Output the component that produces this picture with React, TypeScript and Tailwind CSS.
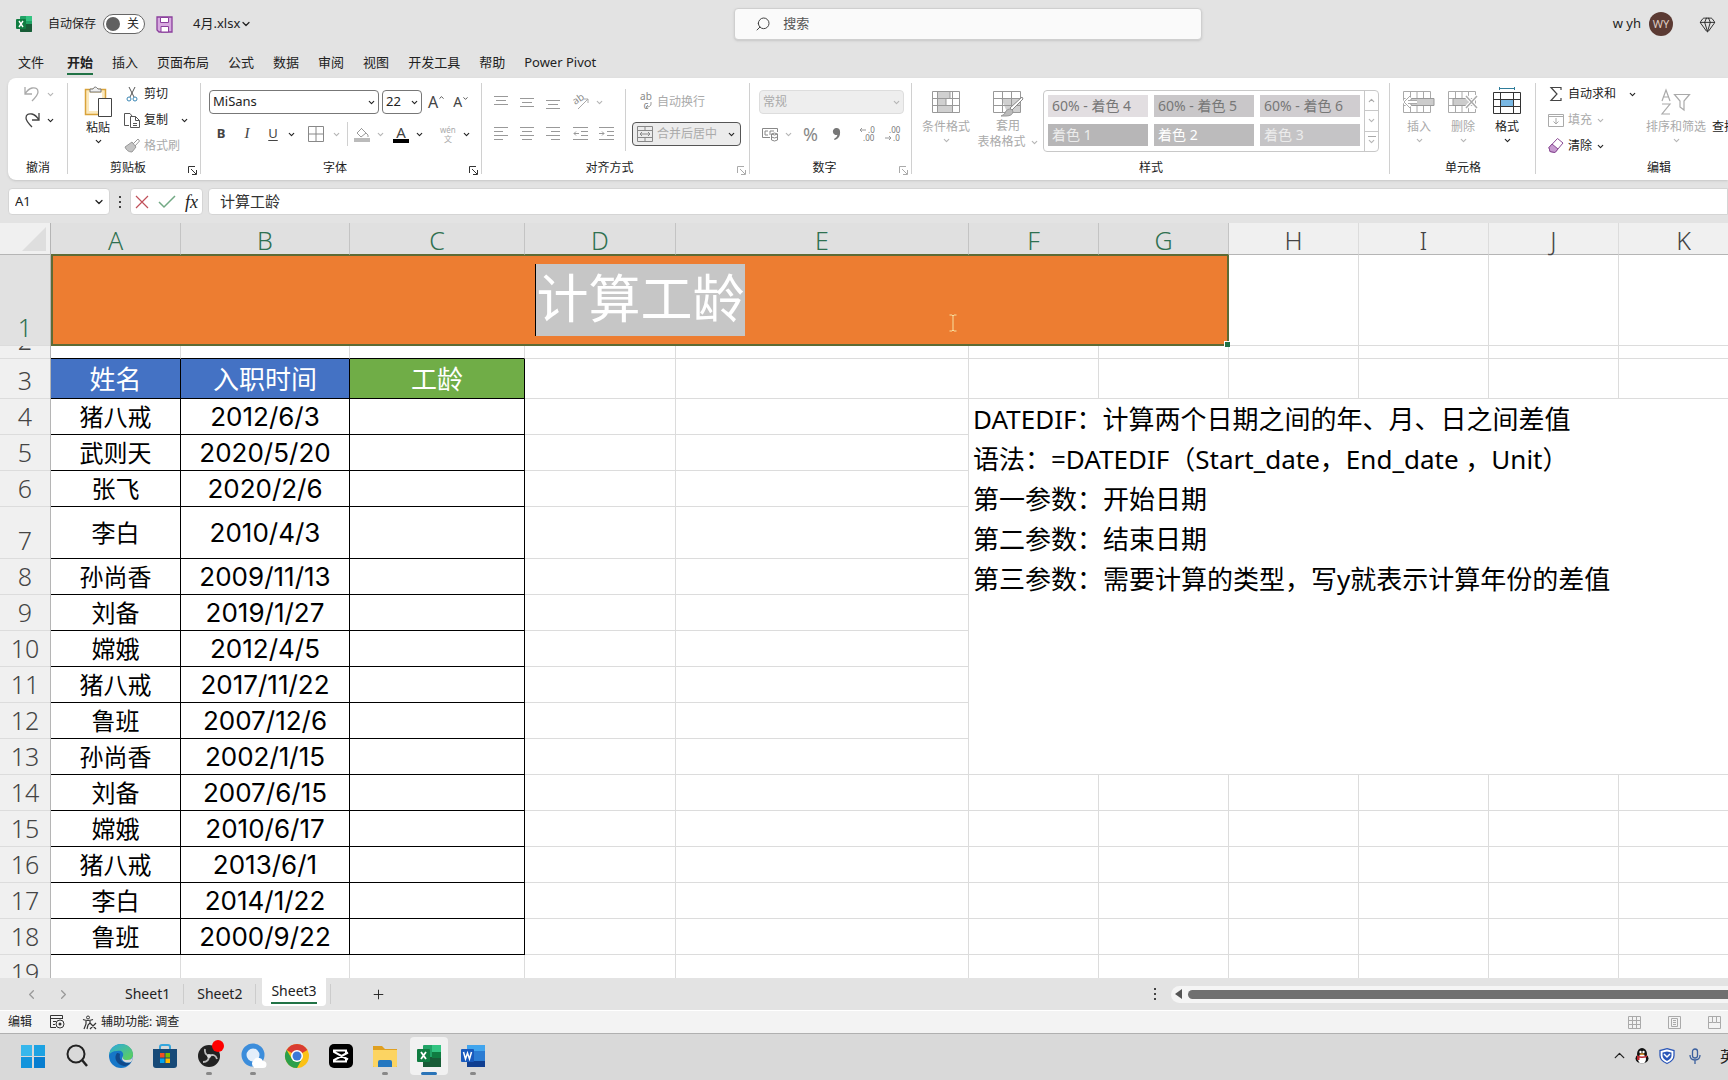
import React, { useState } from 'react';
import { ChevronDown, ChevronLeft, ChevronRight, ChevronUp, Gem, Plus, Search } from 'lucide-react';

const menus = ['开始', '插入', '页面布局', '公式', '数据', '审阅', '视图', '开发工具', '帮助', 'Power Pivot'];

const columns = [
    { name: 'A', width: 'w-[130px]' },
    { name: 'B', width: 'w-[169px]' },
    { name: 'C', width: 'w-[175px]' },
    { name: 'D', width: 'w-[151px]' },
    { name: 'E', width: 'w-[293px]' },
    { name: 'F', width: 'w-[130px]' },
    { name: 'G', width: 'w-[130px]' },
    { name: 'H', width: 'w-[130px]' },
    { name: 'I', width: 'w-[130px]' },
    { name: 'J', width: 'w-[130px]' },
    { name: 'K', width: 'w-[130px]' },
];

const people = [
    ['猪八戒', '2012/6/3'],
    ['武则天', '2020/5/20'],
    ['张飞', '2020/2/6'],
    ['李白', '2010/4/3'],
    ['孙尚香', '2009/11/13'],
    ['刘备', '2019/1/27'],
    ['嫦娥', '2012/4/5'],
    ['猪八戒', '2017/11/22'],
    ['鲁班', '2007/12/6'],
    ['孙尚香', '2002/1/15'],
    ['刘备', '2007/6/15'],
    ['嫦娥', '2010/6/17'],
    ['猪八戒', '2013/6/1'],
    ['李白', '2014/1/22'],
    ['鲁班', '2000/9/22'],
];

const notes = [
    'DATEDIF：计算两个日期之间的年、月、日之间差值',
    '语法：=DATEDIF（Start_date，End_date ，Unit）',
    '第一参数：开始日期',
    '第二参数：结束日期',
    '第三参数：需要计算的类型，写y就表示计算年份的差值',
];

const styles = [
    { name: '60% - 着色 4', look: 'bg-[#e2dee1] text-[#777]' },
    { name: '60% - 着色 5', look: 'bg-[#c9c7c9] text-[#777]' },
    { name: '60% - 着色 6', look: 'bg-[#d0cdd0] text-[#777]' },
    { name: '着色 1', look: 'bg-[#b7b6b7] text-[#ececec]' },
    { name: '着色 2', look: 'bg-[#bcbbbc] text-white' },
    { name: '着色 3', look: 'bg-[#c5c4c6] text-[#ececec]' },
];

const Arrow = ({ dim = false }: { dim?: boolean }) => (
    <ChevronDown size={9} strokeWidth={3} className={`shrink-0 ${dim ? 'text-[#b5b5b5]' : 'text-[#222]'}`} />
);

const Sep = () => <span className="h-6 w-px shrink-0 bg-[#d0d0d0]" />;

const Icon = ({ children, w = 16, h = 16, label }: { children: React.ReactNode; w?: number; h?: number; label?: string }) => (
    <svg width={w} height={h} viewBox={`0 0 ${w} ${h}`} fill="none" className="shrink-0 overflow-visible" aria-label={label}>
        {children}
    </svg>
);

const Group = ({ title, width, launcher, dim, children }: { title: string; width: string; launcher?: boolean; dim?: boolean; children: React.ReactNode }) => (
    <section className={`relative flex shrink-0 flex-col ${width}`}>
        <div className="flex h-[79px] items-start">{children}</div>
        <div className="flex h-[22px] items-center">
            <span className="flex-1 text-center">{title}</span>
            {launcher && (
                <button aria-label={`${title}设置`} className={`mr-1 mt-1 ${dim ? 'text-[#aaa]' : 'text-[#333]'}`}>
                    <Icon w={9} h={9}>
                        <path d="M.5 7V.5H7M3 3l5 5M8.500 4v4.500H4" stroke="currentColor" />
                    </Icon>
                </button>
            )}
        </div>
        <span className="absolute right-0 top-[5px] h-[91px] w-px bg-[#d0d0d0]" />
    </section>
);

const Lines = ({ rows }: { rows: number[][] }) => (
    <Icon>
        {rows.map(([x, y, w], i) => (
            <path key={i} d={`M${x} ${y}.500h${w}`} stroke="#999" />
        ))}
    </Icon>
);

const BigButton = ({ icon, text, dim }: { icon: React.ReactNode; text: string; dim?: boolean }) => (
    <button className={`flex w-11 shrink-0 flex-col items-center whitespace-nowrap pt-2 ${dim ? 'text-[#aaa]' : ''}`}>
        <span className="flex h-8 items-center">{icon}</span>
        <span className="leading-[18px]">{text}</span>
        <span className="flex h-2 items-center"><Arrow dim={dim} /></span>
    </button>
);

const gridPath = 'M.500.500h27v21H.500zM.500 7.500h27M.500 14.500h27M7.500.500v21M14 .500v21M20.500.500v21';

const TitleBar = () => {
    const [autoSave, setAutoSave] = useState(false);
    return (
        <header className="flex h-12 shrink-0 items-center pl-4">
            <Icon label="Excel">
                <rect x="4" y="0" width="12" height="16" rx="1" fill="#21a366" />
                <path d="M10 0h5a1 1 0 0 1 1 1v4h-6z" fill="#33c481" />
                <path d="M4 8h12v7a1 1 0 0 1-1 1H5a1 1 0 0 1-1-1z" fill="#185c37" />
                <rect x="0" y="3" width="10" height="10" rx="1" fill="#107c41" />
                <path d="m3 5 4 6M7 5l-4 6" stroke="#fff" strokeWidth="1.400" />
            </Icon>
            <span className="ml-4">自动保存</span>
            <button
                role="switch"
                aria-checked={autoSave}
                onClick={() => setAutoSave(!autoSave)}
                className="ml-[7px] flex h-5 w-[42px] items-center rounded-full border border-[#666] bg-white px-[2px]"
            >
                <span className="h-[14px] w-[14px] rounded-full bg-[#606060]" />
                <span className="ml-[7px]">关</span>
            </button>
            <button aria-label="保存" className="ml-[11px]">
                <Icon w={17} h={17}>
                    <path d="M1 1h15v15H3l-2-2z" fill="#d7a9e0" stroke="#8a3f9c" strokeWidth="1.300" />
                    <path d="M4.500 1.500h8v5h-8zM5 10.500h7.500V16H5z" fill="#fff" stroke="#8a3f9c" />
                </Icon>
            </button>
            <button className="ml-5 flex items-center gap-1 text-[13px]">
                4月.xlsx <ChevronDown size={12} strokeWidth={2.500} className="-ml-1" />
            </button>
            <label className="ml-[482px] flex h-8 w-[468px] items-center gap-3 rounded border border-[#cfcfcf] bg-[#fafafa] pl-5 shadow-sm">
                <Search size={16} strokeWidth={1.500} className="shrink-0 -scale-x-100 text-[#444]" />
                <input placeholder="搜索" className="w-full bg-transparent text-[13px] outline-none placeholder:text-[#555]" />
            </label>
            <div className="ml-auto flex items-center pr-3">
                <span className="text-[13px]">w yh</span>
                <span className="ml-2 flex h-6 w-6 items-center justify-center rounded-full bg-[#5b3a33] text-[11px] text-[#ddc9c0]">WY</span>
                <Gem size={17} strokeWidth={1.300} className="ml-[26px]" />
            </div>
        </header>
    );
};

const MenuBar = () => {
    const [active, setActive] = useState('开始');
    return (
        <nav className="flex h-[30px] shrink-0 items-start gap-[23px] pl-[18px] text-[13px] leading-[22px]">
            <button className="h-[27px] border-b-2 border-transparent pt-[3px]">文件</button>
            <div className="flex gap-[19px]">
                {menus.map((menu) => (
                    <button
                        key={menu}
                        onClick={() => setActive(menu)}
                        className={`h-[27px] border-b-2 pt-[3px] whitespace-nowrap ${
                            active === menu ? 'border-[#217346] font-bold' : 'border-transparent'
                        }`}
                    >
                        {menu}
                    </button>
                ))}
            </div>
        </nav>
    );
};

const FontGroup = () => (
    <Group title="字体" width="w-[281px]" launcher>
        <div className="flex flex-col gap-2 pl-2 pt-3">
            <div className="flex h-6 items-center">
                <label className="relative flex items-center">
                    <select aria-label="字体" className="h-6 w-[170px] appearance-none rounded border border-[#777] bg-white pl-[3px] text-[13px]">
                        <option>MiSans</option>
                    </select>
                    <span className="pointer-events-none absolute right-[3px]"><Arrow /></span>
                </label>
                <label className="relative ml-[3px] flex items-center">
                    <select aria-label="字号" className="h-6 w-10 appearance-none rounded border border-[#777] bg-white pl-[3px] text-[13px]">
                        <option>22</option>
                    </select>
                    <span className="pointer-events-none absolute right-[3px]"><Arrow /></span>
                </label>
                <button aria-label="增大字号" className="ml-1.5 flex text-base text-[#444]">
                    A<ChevronUp size={7} strokeWidth={3} className="mt-1" />
                </button>
                <button aria-label="减小字号" className="ml-2 flex items-center text-sm text-[#444]">
                    A<ChevronDown size={7} strokeWidth={3} className="mb-2" />
                </button>
            </div>
            <div className="flex h-6 items-center">
                <button className="w-6 text-[13px] font-bold text-[#444]">B</button>
                <button className="w-7 font-['Liberation_Serif',serif] text-[15px] italic text-[#444]">I</button>
                <button className="w-6 text-[13px] text-[#444] underline underline-offset-2">U</button>
                <span className="ml-0.5"><Arrow /></span>
                <span className="ml-1.5"><Sep /></span>
                <button aria-label="边框" className="mx-1.5 flex items-center gap-2">
                    <Icon><path d="M.500.500h15v15H.500zM8 .500v15M.500 8h15" stroke="#888" /></Icon>
                    <Arrow dim />
                </button>
                <Sep />
                <button aria-label="填充颜色" className="ml-1.5 flex items-center gap-1.5">
                    <Icon>
                        <path d="m7 2 5 5-5 4-4-4 5-5M12 7l2 2v2" stroke="#999" />
                        <path d="M0 12h16v4H0z" fill="#bbb" />
                    </Icon>
                    <Arrow dim />
                </button>
                <button aria-label="字体颜色" className="ml-2 flex items-center gap-1.5">
                    <span className="w-4 border-b-4 border-black text-center text-[15px] leading-[14px] text-[#444]">A</span>
                    <Arrow />
                </button>
                <span className="mx-2"><Sep /></span>
                <button aria-label="拼音" className="flex items-center gap-1.5 text-[#aaa]">
                    <span className="flex flex-col items-center text-[8px] leading-[9px]"><span>wén</span><span>文</span></span>
                    <Arrow />
                </button>
            </div>
        </div>
    </Group>
);

const AlignGroup = () => (
    <Group title="对齐方式" width="w-[268px]" launcher dim>
        <div className="flex flex-col gap-2 pl-[11px] pt-3">
            <div className="flex h-6 items-center gap-2.5">
                <Lines rows={[[1, 2, 14], [3, 6, 10], [1, 10, 14]]} />
                <Lines rows={[[1, 4, 14], [3, 8, 10], [1, 12, 14]]} />
                <Lines rows={[[1, 6, 14], [3, 10, 10], [1, 14, 14]]} />
                <span className="-mx-1"><Sep /></span>
                <button aria-label="方向" className="flex items-center gap-1.5">
                    <Icon>
                        <text x="1" y="9" fontSize="10" fill="#888" transform="rotate(-35 5 8)">ab</text>
                        <path d="m5 15 10-10M11 5h4v4" stroke="#aaa" />
                    </Icon>
                    <Arrow dim />
                </button>
            </div>
            <div className="flex h-6 items-center gap-2.5">
                <Lines rows={[[1, 1, 14], [1, 5, 9], [1, 9, 14], [1, 13, 9]]} />
                <Lines rows={[[1, 1, 14], [3, 5, 10], [1, 9, 14], [3, 13, 10]]} />
                <Lines rows={[[1, 1, 14], [6, 5, 9], [1, 9, 14], [6, 13, 9]]} />
                <span className="-mx-1"><Sep /></span>
                <Icon><path d="M0 1.500h15M8 5.500h7M8 9.500h7M0 13.500h15M1 7.500h5M3 5.500l-2 2 2 2" stroke="#999" /></Icon>
                <Icon><path d="M0 1.500h15M8 5.500h7M8 9.500h7M0 13.500h15M0 7.500h5M3 5.500l2 2-2 2" stroke="#999" /></Icon>
            </div>
        </div>
        <div className="ml-2.5 mt-[11px] h-[62px] w-px bg-[#d0d0d0]" />
        <div className="flex flex-col gap-2 pl-1.5 pt-3 text-[#aaa]">
            <button className="flex h-6 items-center gap-[3px] pl-1.5">
                <Icon>
                    <foreignObject x="0" y="-2" width="16" height="20">
                        <span className="flex flex-col text-[10px] leading-[9px] text-[#888]"><span>ab</span><span>c</span></span>
                    </foreignObject>
                    <path d="M13 8v2q0 3-5 3m2-2-2 2 2 2" stroke="#999" />
                </Icon>
                自动换行
            </button>
            <button className="flex h-6 w-[109px] items-center gap-1 whitespace-nowrap rounded border border-[#555] bg-[#ececec] pl-1">
                <Icon><path d="M.500.500h15v15H.500zM.500 4.500h15M.500 11.500h15M8 .500v4M8 11.500v4M3 8h10M5 6 3 8l2 2M11 6l2 2-2 2" stroke="#888" /></Icon>
                合并后居中
                <span className="ml-auto mr-1"><Arrow /></span>
            </button>
        </div>
    </Group>
);

const NumberGroup = () => (
    <Group title="数字" width="w-[162px]" launcher dim>
        <div className="flex flex-1 flex-col gap-2 pl-[9px] pr-2 pt-3">
            <label className="relative flex items-center">
                <select aria-label="数字格式" className="h-6 w-full appearance-none rounded border border-[#ddd] bg-[#eee] pl-[3px] text-[#aaa]">
                    <option>常规</option>
                </select>
                <span className="pointer-events-none absolute right-[3px]"><Arrow dim /></span>
            </label>
            <div className="flex h-6 items-center pl-[3px]">
                <Icon>
                    <path d="M8 11.500H.500v-9h15V6M6 5H3v4h3M8 9V5h4" stroke="#888" />
                    <path d="M9.500 8q3-2 6 0v6q-3 2-6 0zM9.500 8q3 2 6 0M9.500 11q3 2 6 0" stroke="#888" fill="#fff" />
                </Icon>
                <span className="ml-1.5"><Arrow dim /></span>
                <button className="ml-2.5 text-lg leading-6 text-[#888]">%</button>
                <button aria-label="千位分隔" className="ml-[14px]">
                    <Icon w={9} h={14}><path d="M4.500 1a3.500 3.500 0 1 0 1 6.800Q5 11 2 12l.500 1C7 12 8.500 8 8 4.500A3.500 3.500 0 0 0 4.500 1z" fill="#777" /></Icon>
                </button>
                <span className="ml-2.5"><Sep /></span>
                <button aria-label="增加小数位数" className="ml-2">
                    <Icon>
                        <path d="M1 4h6M3 2 1 4l2 2" stroke="#999" />
                        <text x="9" y="7" fontSize="8" fill="#777">.0</text>
                        <text x="4" y="15" fontSize="8" fill="#777">.00</text>
                    </Icon>
                </button>
                <button aria-label="减少小数位数" className="ml-2.5">
                    <Icon>
                        <path d="M0 12h6M4 10l2 2-2 2" stroke="#999" />
                        <text x="4" y="7" fontSize="8" fill="#777">.00</text>
                        <text x="8" y="15" fontSize="8" fill="#777">.0</text>
                    </Icon>
                </button>
            </div>
        </div>
    </Group>
);

const StyleGroup = () => (
    <Group title="样式" width="w-[478px]">
        <div className="pl-3">
            <BigButton
                dim
                text="条件格式"
                icon={<Icon w={28} h={22}><path d="M6 0h12v7H6zM6 7h8v7H6zM6 14h14v7H6z" fill="#d0d0d0" /><path d="M.500.500h27v21H.500zM.500 7.500h27M.500 14.500h27M5.500.500v21M18 .500v7M14 7.500v7M20.500 .500v21" stroke="#999" /></Icon>}
            />
        </div>
        <button className="ml-2.5 flex w-[60px] flex-col items-center whitespace-nowrap pt-2 text-[#aaa]">
            <span className="flex h-8 items-center">
                <Icon w={31} h={28}>
                    <path d="M8 10h20v14H14z" fill="#d0d0d0" />
                    <path d="M.500 3.500h27v21H.500zM.500 10.500h27M.500 17.500h27M9.500 3.500v21M18.500 3.500v21" stroke="#999" />
                    <path d="M29 9 17 20l2 2L30 11z" fill="#fff" stroke="#888" />
                    <path d="M8 28q4-1 5-5 4-4 7 0 0 5-7 5z" fill="#bbb" stroke="#999" />
                </Icon>
            </span>
            <span className="leading-4">套用</span>
            <span className="flex items-center gap-1 leading-4">表格格式 <Arrow dim /></span>
        </button>
        <div className="ml-[5px] mt-3 flex h-[62px] w-[336px] rounded border border-[#c8c8c8]">
            <div className="grid flex-1 grid-cols-3 gap-1.5 p-1">
                {styles.map((s) => (
                    <button key={s.name} className={`h-[22px] whitespace-nowrap pl-1 text-left text-sm leading-[22px] ${s.look}`}>
                        {s.name}
                    </button>
                ))}
            </div>
            <div className="flex w-[14px] flex-col divide-y divide-[#c8c8c8] border-l border-[#c8c8c8] text-[#aaa]">
                <button aria-label="上一行" className="flex flex-1 items-center justify-center"><ChevronUp size={9} strokeWidth={3} /></button>
                <button aria-label="下一行" className="flex flex-1 items-center justify-center"><Arrow dim /></button>
                <button aria-label="其他" className="flex flex-1 flex-col items-center justify-center">
                    <span className="h-px w-2 bg-[#aaa]" />
                    <Arrow dim />
                </button>
            </div>
        </div>
    </Group>
);

const Ribbon = () => (
    <div className="ml-2 flex h-[102px] shrink-0 overflow-hidden rounded-l-lg bg-white shadow">
        <Group title="撤消" width="w-[60px]">
            <div className="flex flex-col gap-2.5 pl-4 pt-2">
                <button aria-label="撤消" className="flex items-center gap-1.5">
                    <Icon><path d="M1 1v7h7M1 8q3-5 7-6 6-1 6 4 0 3-6 9" stroke="#aaa" strokeWidth="1.300" /></Icon>
                    <Arrow dim />
                </button>
                <button aria-label="恢复" className="flex items-center gap-1.5">
                    <Icon><path d="M15 1v7H8M15 8q-3-5-7-6-6-1-6 4 0 3 6 9" stroke="#444" strokeWidth="1.300" /></Icon>
                    <Arrow />
                </button>
            </div>
        </Group>
        <Group title="剪贴板" width="w-[133px]" launcher>
            <button className="ml-2 flex w-11 flex-col items-center pt-[7px]">
                <Icon w={28} h={32}>
                    <path d="M1.500 4.500h20v25h-20z" fill="#fbe9bd" stroke="#d9a33a" strokeWidth="1.500" />
                    <path d="M5 8h13v18H5z" fill="#fff" />
                    <path d="M6 7V4h3q2-4 5 0h3v3z" fill="#eee" stroke="#777" />
                    <path d="M14.500 13.500h13v18h-13z" fill="#fff" stroke="#444" />
                </Icon>
                <span className="mt-0.5 leading-[18px]">粘贴</span>
                <Arrow />
            </button>
            <div className="flex flex-col gap-2 pl-1 pt-[7px]">
                <button className="flex h-[18px] items-center gap-1">
                    <Icon>
                        <path d="M5 1l5 10M11 1 6 11" stroke="#555" />
                        <circle cx="5" cy="13" r="2" stroke="#3a86b4" /><circle cx="11" cy="13" r="2" stroke="#3a86b4" />
                    </Icon>
                    剪切
                </button>
                <button className="flex h-[18px] items-center gap-1">
                    <Icon><path d="M5 13.500H.500v-12H6L8 4M6.500 4.500h5l4 4v7h-9zM11.500 4.500v4h4M9 11.500h4M9 13.500h4" stroke="#555" /></Icon>
                    复制
                    <span className="ml-2"><Arrow /></span>
                </button>
                <button className="flex h-[18px] items-center gap-1 text-[#aaa]">
                    <Icon>
                        <path d="M1 9l7-5 4 5-4 5q-5 0-7-5z" fill="#c4c4c4" stroke="#999" />
                        <path d="m9 6 5-5 1.500 2L11 8" stroke="#999" />
                    </Icon>
                    格式刷
                </button>
            </div>
        </Group>
        <FontGroup />
        <AlignGroup />
        <NumberGroup />
        <StyleGroup />
        <Group title="单元格" width="w-[146px]">
            <div className="flex pl-[7px]">
                <BigButton dim text="插入" icon={<Icon w={32} h={22}><path d={gridPath} stroke="#aaa" /><path d="M8 7.500h23v7H8z" fill="#ccc" stroke="#999" /><path d="M14 11H2M7 6l-5 5 5 5" stroke="#fff" strokeWidth="4" /><path d="M14 9.500H5M14 12.500H5M7 5 1 11l6 6" stroke="#aaa" /></Icon>} />
                <BigButton dim text="删除" icon={<Icon w={30} h={22}><path d={gridPath} stroke="#aaa" /><path d="M5 7.500h16v7H5z" fill="#ccc" stroke="#999" /><path d="m18 5 11 12M29 5 18 17" stroke="#fff" strokeWidth="4" /><path d="m18 5 11 12M29 5 18 17" stroke="#aaa" strokeWidth="1.500" /></Icon>} />
                <BigButton text="格式" icon={<Icon w={28} h={30}><path d="M6.500 1.500h15M6.500 0v3M21.500 0v3" stroke="#2f7d9b" /><path d="M.500 5.500h27v21H.500zM.500 12.500h27M.500 19.500h27M7.500 5.500v21M20.500 5.500v21" stroke="#333" /><path d="M8 13h12v6H8z" fill="#79b8e4" /></Icon>} />
            </div>
        </Group>
        <Group title="编辑" width="w-[246px]">
            <div className="flex w-[102px] shrink-0 flex-col gap-2 pl-3 pt-[7px]">
                <button className="flex h-[18px] items-center gap-1 whitespace-nowrap">
                    <Icon><path d="M13 4V1.500H3L9 8l-6 6.500h10V12" stroke="#444" strokeWidth="1.200" /></Icon>
                    自动求和
                    <span className="ml-2"><Arrow /></span>
                </button>
                <button className="flex h-[18px] items-center gap-1 text-[#aaa]">
                    <Icon><path d="M.500 2.500h15v12H.500zM.500 4.500h15M8 6v6M5.500 9.500 8 12l2.500-2.500" stroke="#aaa" /></Icon>
                    填充 <Arrow dim />
                </button>
                <button className="flex h-[18px] items-center gap-1">
                    <Icon><path d="M1 9.500 9.500.500 15 5 7 14.500 2 13.500z" fill="#fff" stroke="#8a4a94" /><path d="M1 9.500 4 6l6 5-3 3.500-5-1z" fill="#c79bd0" stroke="#8a4a94" /></Icon>
                    清除 <Arrow />
                </button>
            </div>
            <div className="flex pl-4">
                <BigButton dim text="排序和筛选" icon={<Icon w={30} h={28}><path d="m1 13 4-11 4 11M2.500 9h5M1 16h8L1 26h8M13.500 6.500h15L23 13v9l-4-3v-6z" stroke="#aaa" strokeWidth="1.200" /></Icon>} />
                <div className="ml-[22px]">
                    <BigButton text="查找和选择" icon={<Search size={22} strokeWidth={1.200} className="text-[#444]" />} />
                </div>
            </div>
        </Group>
    </div>
);

const FormulaBar = () => (
    <div className="flex h-[43px] shrink-0 items-center pl-2">
        <div className="flex h-[27px] w-[102px] items-center rounded border border-[#d5d5d5] bg-white pl-1.5 pr-1">
            <input aria-label="名称框" defaultValue="A1" className="w-full bg-transparent text-[13px] outline-none" />
            <ChevronDown size={12} strokeWidth={2.500} className="shrink-0" />
        </div>
        <span className="flex w-[20px] flex-col items-center gap-[3px]">
            <i className="h-0.5 w-0.5 bg-[#444]" /><i className="h-0.5 w-0.5 bg-[#444]" /><i className="h-0.5 w-0.5 bg-[#444]" />
        </span>
        <div className="flex h-[27px] w-[73px] items-center justify-between rounded border border-[#d5d5d5] bg-white px-1">
            <button aria-label="取消"><Icon w={14} h={14}><path d="m1 1 12 12M13 1 1 13" stroke="#c0505a" strokeWidth="1.200" /></Icon></button>
            <button aria-label="输入"><Icon w={18} h={14}><path d="m1 7 5 5L17 1" stroke="#72a984" strokeWidth="1.500" /></Icon></button>
            <button aria-label="插入函数" className="font-['Liberation_Serif',serif] text-lg leading-5 italic">fx</button>
        </div>
        <input aria-label="编辑栏" defaultValue="计算工龄" className="ml-[5px] h-[27px] flex-1 rounded-l border border-[#d5d5d5] bg-white pb-[3px] pl-[11px] text-[15px] text-[#333] outline-none" />
    </div>
);

const line = 'border-r border-b border-[#dcdcdc] p-0';
const boxed = 'border-r border-b border-black p-0 text-center';

const RowHead = ({ n, height, active }: { n: number; height: string; active?: boolean }) => (
    <th className="border-r border-[#b5b5b5] p-0 font-light">
        <div className={`flex items-end justify-center overflow-hidden border-b border-[#dcdcdc] text-[25px] leading-9 ${height} ${active ? 'bg-[#e1e1e1] text-[#2f7050]' : 'bg-[#f0f0f0] text-[#444]'}`}>
            {n}
        </div>
    </th>
);

const Empty = ({ count }: { count: number }) => (
    <>
        {Array.from({ length: count }, (_, i) => <td key={i} className={line} />)}
    </>
);

const Sheet = () => (
    <div className="min-h-0 flex-1 overflow-hidden bg-white">
        <table className="w-[1749px] table-fixed border-separate border-spacing-0 text-black">
            <colgroup>
                <col className="w-[51px]" />
                {columns.map((c) => <col key={c.name} className={c.width} />)}
            </colgroup>
            <thead>
                <tr className="text-[25px] leading-[28px]">
                    <th className="border-r border-b border-[#b5b5b5] bg-[#f0f0f0] p-0">
                        <svg width="24" height="24" viewBox="0 0 24 24" className="ml-auto mr-1"><path d="M24 0v24H0z" fill="#dedede" /></svg>
                    </th>
                    {columns.map((c, i) => (
                        <th key={c.name} className={`border-r border-b p-0 pt-[3px] font-light ${i < 7 ? 'border-r-[#c4c4c4] border-b-[#5d6b35] bg-[#e0e0e0] text-[#2f7050]' : 'border-r-[#dcdcdc] border-b-[#b5b5b5] bg-[#f0f0f0] text-[#444]'}`}>
                            {c.name}
                        </th>
                    ))}
                </tr>
            </thead>
            <tbody>
                <tr>
                    <RowHead n={1} height="h-[91px]" active />
                    <td colSpan={7} className="p-0">
                        <div className="relative flex h-[91px] items-center justify-center border-2 border-t border-[#5d6b35] bg-[#ed7d31]">
                            <span className="h-[72px] border-l border-black bg-[#c6c6c6] text-[52px] leading-[68px] text-white">计算工龄</span>
                            <svg width="8" height="18" viewBox="0 0 8 18" className="absolute bottom-3 left-[896px]" fill="none">
                                <path d="M.500 1h2.500l1 1 1-1h2.500M4 2v14M.500 17h2.500l1-1 1 1h2.500" stroke="#f7e0a0" />
                            </svg>
                            <span className="absolute -bottom-[3px] -right-[3px] h-[6px] w-[6px] border-l border-t border-white bg-[#217346]" />
                        </div>
                    </td>
                    <Empty count={4} />
                </tr>
                <tr>
                    <RowHead n={2} height="h-[13px]" />
                    {[0, 1, 2].map((i) => <td key={i} className="border-r border-b border-r-[#dcdcdc] border-b-black p-0" />)}
                    <Empty count={8} />
                </tr>
                <tr className="text-[26px] leading-9 text-white">
                    <RowHead n={3} height="h-[40px]" />
                    <td className={`${boxed} bg-[#4472c4]`}>姓名</td>
                    <td className={`${boxed} bg-[#4472c4]`}>入职时间</td>
                    <td className={`${boxed} bg-[#70ad47]`}>工龄</td>
                    <Empty count={8} />
                </tr>
                {people.map(([name, date], i) => (
                    <tr key={i} className="text-2xl">
                        <RowHead n={i + 4} height={i === 3 ? 'h-[52px]' : 'h-[36px]'} />
                        <td className={boxed}>{name}</td>
                        <td className={`${boxed} font-['Inter','Noto_Sans_CJK_SC',sans-serif] text-[26px] leading-8`}>{date}</td>
                        <td className={boxed} />
                        <Empty count={2} />
                        {i === 0 && (
                            <td rowSpan={10} colSpan={6} className="border-b border-[#dcdcdc] p-0 pl-1 align-top text-[26px] leading-10 whitespace-pre">
                                {notes.map((note) => <p key={note}>{note}</p>)}
                            </td>
                        )}
                        {i > 9 && <Empty count={6} />}
                    </tr>
                ))}
                <tr>
                    <RowHead n={19} height="h-[36px]" />
                    <Empty count={11} />
                </tr>
            </tbody>
        </table>
    </div>
);

const SheetTabs = () => {
    const [sheet, setSheet] = useState('Sheet3');
    return (
        <div className="flex h-8 shrink-0 items-center text-sm">
            <button aria-label="上一个工作表" className="ml-6"><ChevronLeft size={15} className="text-[#999]" /></button>
            <button aria-label="下一个工作表" className="ml-[17px]"><ChevronRight size={15} className="text-[#999]" /></button>
            <div className="ml-[41px] flex h-full items-start">
                {['Sheet1', 'Sheet2', 'Sheet3'].map((name) => (
                    <button
                        key={name}
                        onClick={() => setSheet(name)}
                        className={sheet === name ? 'ml-1.5 h-7 rounded-b bg-white px-[9px]' : 'mt-1.5 h-5 border-r border-[#ccc] px-[13px] leading-5'}
                    >
                        <span className={sheet === name ? 'block border-b-2 border-[#217346] leading-[22px]' : ''}>{name}</span>
                    </button>
                ))}
            </div>
            <span className="ml-1 h-5 w-px bg-[#ccc]" />
            <button aria-label="新工作表" className="ml-10"><Plus size={15} strokeWidth={1.500} /></button>
            <div className="ml-auto flex w-[576px] items-center">
                <span className="flex w-[6px] flex-col items-center gap-[3px]">
                    <i className="h-0.5 w-0.5 bg-[#444]" /><i className="h-0.5 w-0.5 bg-[#444]" /><i className="h-0.5 w-0.5 bg-[#444]" />
                </span>
                <div className="ml-[13px] flex h-[17px] flex-1 items-center gap-1.5 rounded-l-full bg-[#f5f5f5] pl-1">
                    <svg width="7" height="10" viewBox="0 0 7 10"><path d="M7 0v10L0 5z" fill="#555" /></svg>
                    <span className="h-[9px] flex-1 rounded-l-full bg-[#707070]" />
                </div>
            </div>
        </div>
    );
};

const StatusBar = () => (
    <div className="flex h-[23px] shrink-0 items-center border-t border-white bg-[#f3f3f3] pl-2">
        <span>编辑</span>
        <span className="ml-[18px]">
            <Icon w={15} h={14}>
                <path d="M6 12.500H.500v-12h12V4M.500 3.500h12M3 6.500h3M3 9.500h2" stroke="#333" />
                <circle cx="10" cy="9" r="4" stroke="#333" /><circle cx="10" cy="9" r="1.500" fill="#333" />
            </Icon>
        </span>
        <button className="ml-[17px] flex items-center gap-1">
            <Icon w={15} h={15}>
                <circle cx="6" cy="2.500" r="1.500" stroke="#333" />
                <path d="M1 4.500q5 2 10 0M4 6v3l-2 5M8 6v2l-2 2-1 4M8 8l6 6M14 8l-6 6" stroke="#333" strokeWidth="1.200" />
            </Icon>
            辅助功能: 调查
        </button>
        <div className="ml-auto flex gap-[27px] pr-[7px]">
            <Icon w={13} h={13}><path d="M.500.500h12v12H.500zM.500 4.500h12M.500 8.500h12M4.500.500v12M8.500.500v12" stroke="#aaa" /></Icon>
            <Icon w={13} h={13}><path d="M.500.500h12v12H.500zM3.500 2.500h6v8h-6zM5 4.500h3M5 6.500h3M5 8.500h3" stroke="#aaa" /></Icon>
            <Icon w={13} h={13}><path d="M.500.500h12v12H.500zM4.500.500v6h-4M8.500.500v6h4M4.500 6.500h4" stroke="#aaa" /></Icon>
        </div>
    </div>
);

const apps = [
    {
        name: '开始',
        icon: <><path d="M0 1h11v11H0z" fill="#37b7ec" /><path d="M13 1h11v11H13z" fill="#1da2e2" /><path d="M0 13h11v11H0z" fill="#1394dc" /><path d="M13 13h11v11H13z" fill="#087ed0" /></>,
    },
    {
        name: '搜索',
        icon: <><circle cx="11" cy="10" r="8.500" stroke="#222" strokeWidth="2" /><path d="m17 16 5 6" stroke="#222" strokeWidth="2.500" /></>,
    },
    {
        name: 'Edge',
        icon: (
            <>
                <defs>
                    <linearGradient id="edge" x1="0" y1="0" x2="1" y2="1"><stop stopColor="#2ba9e1" /><stop offset="1" stopColor="#62d34e" /></linearGradient>
                </defs>
                <circle cx="12" cy="12" r="12" fill="#1677c8" />
                <path d="M0 11C1 4 6 0 12 0c7 0 12 5 12 10 0 4-3 6-6 6-4 0-5-2-4-4 1-4-2-6-6-5-4 0-7 2-8 4z" fill="url(#edge)" />
                <path d="M8 9c-4 5 0 12 7 13 3 0 6-2 7-4-5 3-13-1-11-8-1-1-2-1-3-1z" fill="#114a8b" />
                <path d="M14 12c-1 2 0 4 4 4 3 0 5-1 6-4 0 2-1 5-2 6-6 2-11-2-8-6z" fill="#d9d9d9" />
            </>
        ),
    },
    {
        name: 'Store',
        icon: (
            <>
                <path d="M7 6V3q0-2 2-2h6q2 0 2 2v3" stroke="#35a6dd" strokeWidth="2" />
                <path d="M0 5h24v16q0 3-3 3H3q-3 0-3-3z" fill="#174a78" />
                <path d="M7 9h4.500v4.500H7z" fill="#f25022" /><path d="M12.500 9H17v4.500h-4.500z" fill="#7fba00" /><path d="M7 14.500h4.500V19H7z" fill="#00a4ef" /><path d="M12.500 14.500H17V19h-4.500z" fill="#ffb900" />
            </>
        ),
    },
    {
        name: 'OBS',
        running: true,
        icon: (
            <>
                <circle cx="12" cy="12" r="11" fill="#222" />
                <path d="M12 12q-5-2-4-7M12 12q0 6-6 6M12 12q6-3 8 3" stroke="#bbb" strokeWidth="1.800" />
                <circle cx="12" cy="12" r="2" fill="#ddd" />
                <circle cx="21" cy="2" r="6" fill="#f00" />
            </>
        ),
    },
    {
        name: 'QQ浏览器',
        running: true,
        icon: (
            <>
                <circle cx="12" cy="11" r="9" stroke="#3c8ddb" strokeWidth="5" fill="#e3eefa" />
                <path d="M13 23a4 4 0 0 1 0-7 5 5 0 0 1 9 1 3.500 3.500 0 0 1 0 7h-9z" fill="#fff" />
            </>
        ),
    },
    {
        name: 'Chrome',
        icon: (
            <>
                <circle cx="12" cy="12" r="12" fill="#fbc116" />
                <path d="M12 12 1.600 6A12 12 0 0 1 22.400 6z" fill="#d93c32" />
                <path d="M1.600 6A12 12 0 0 0 12 24l5-9-5 3-5-3z" fill="#2b9f4b" />
                <circle cx="12" cy="12" r="6" fill="#fff" /><circle cx="12" cy="12" r="4.500" fill="#3c78d8" />
            </>
        ),
    },
    {
        name: '剪映',
        icon: <><rect width="24" height="24" rx="5" fill="#000" /><path d="M19 8.500 5 16v1.500h12V15M19 15.500 5 8V6.500h12V9" stroke="#fff" strokeWidth="2" /></>,
    },
    {
        name: '文件资源管理器',
        running: true,
        icon: <><path d="M0 2h9l3 3h12v18H0z" fill="#e0a020" /><path d="M0 6h24v16q0 1-1 1H1q-1 0-1-1z" fill="#fcd462" /><path d="M5 23v-5q0-2 2-2h10q2 0 2 2v5z" fill="#2477c0" /></>,
    },
    {
        name: 'Excel',
        running: true,
        active: true,
        icon: (
            <>
                <rect x="6" y="1" width="18" height="22" rx="1" fill="#21a366" /><path d="M15 1h9v7h-9z" fill="#33c481" /><path d="M6 13h18v10H6z" fill="#185c37" /><path d="M15 8h9v6h-9z" fill="#107c41" />
                <rect x="0" y="5" width="13" height="13" rx="1" fill="#107c41" /><path d="m4 8 5 7M9 8l-5 7" stroke="#fff" strokeWidth="1.800" />
            </>
        ),
    },
    {
        name: 'Word',
        running: true,
        icon: (
            <>
                <rect x="6" y="1" width="18" height="22" rx="1" fill="#2b7cd3" /><path d="M6 1h18v6H6z" fill="#41a5ee" /><path d="M6 17h18v6H6z" fill="#103f91" />
                <rect x="0" y="5" width="13" height="13" rx="1" fill="#185abd" /><path d="m2.500 8 2 7 2-6 2 6 2-7" stroke="#fff" strokeWidth="1.500" />
            </>
        ),
    },
];

const Taskbar = () => (
    <footer className="flex h-[47px] shrink-0 items-center border-t border-[#b0b0b0] bg-[#d9d9d9] pb-[2px] pl-[11px]">
        {apps.map((app) => (
            <button
                key={app.name}
                aria-label={app.name}
                className={`relative mx-[3px] flex h-[38px] w-[38px] items-center justify-center rounded ${app.active ? 'bg-[#f1f1f1]' : ''}`}
            >
                <svg width="24" height="24" viewBox="0 0 24 24" fill="none" className="overflow-visible">{app.icon}</svg>
                {app.running && <span className={`absolute bottom-0 h-[3px] rounded-full ${app.active ? 'w-4 bg-[#2a74b8]' : 'w-1.5 bg-[#888]'}`} />}
            </button>
        ))}
        <div className="ml-auto flex w-[117px] shrink-0 items-center overflow-hidden">
            <ChevronUp size={17} strokeWidth={1.800} className="shrink-0" />
            <span className="ml-1.5">
                <Icon label="QQ">
                    <ellipse cx="8" cy="6" rx="5" ry="6" fill="#111" /><ellipse cx="8" cy="10.500" rx="6.500" ry="5" fill="#111" />
                    <ellipse cx="8" cy="11" rx="4" ry="4.500" fill="#fff" /><circle cx="6.500" cy="4" r="1.200" fill="#fff" /><circle cx="9.500" cy="4" r="1.200" fill="#fff" />
                    <path d="M3 7q5 3 10 0v2Q8 11 3 9z" fill="#b8272e" /><path d="M3 8h2.500v4H3z" fill="#b8272e" /><path d="M5 6q3-1.500 6 0-3 2-6 0z" fill="#e89a30" />
                </Icon>
            </span>
            <span className="ml-[9px]">
                <Icon label="电脑管家">
                    <path d="M8 .700 15 2.500v5q0 5-7 8-7-3-7-8v-5z" fill="#fff" stroke="#2b57b8" strokeWidth="1.300" />
                    <path d="M3.500 4.500 8 3.500l4.500 1v3q0 3-4.500 5.500Q3.500 10.500 3.500 7.500z" fill="#2b57b8" /><path d="M5 6l3 3 3-3" stroke="#fff" strokeWidth="1.500" />
                </Icon>
            </span>
            <span className="ml-3">
                <Icon label="麦克风"><rect x="5.500" y="1" width="5" height="9" rx="2.500" stroke="#3a5f9e" strokeWidth="1.300" /><path d="M3 7q0 5 5 5t5-5M8 12v4" stroke="#3a5f9e" strokeWidth="1.300" /></Icon>
            </span>
            <span className="ml-[17px] text-[15px]">英</span>
        </div>
    </footer>
);

export default function App() {
    return (
        <div className="flex h-screen flex-col overflow-hidden bg-[#e3e3e3] font-['Noto_Sans','Noto_Sans_CJK_SC',sans-serif] text-xs text-[#222]">
            <TitleBar />
            <MenuBar />
            <Ribbon />
            <FormulaBar />
            <Sheet />
            <SheetTabs />
            <StatusBar />
            <Taskbar />
        </div>
    );
}
